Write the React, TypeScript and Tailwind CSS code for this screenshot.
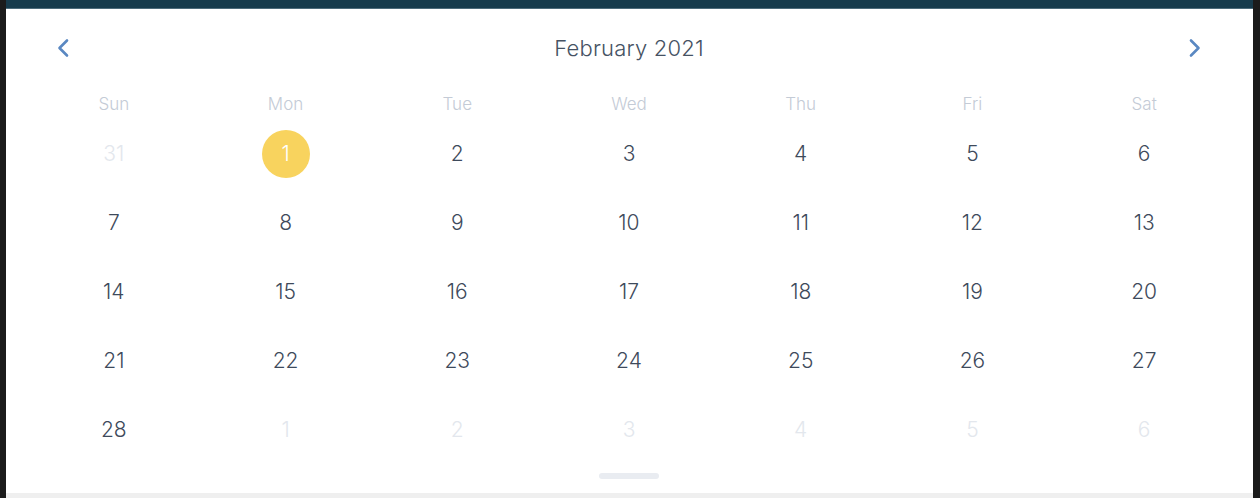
import React from 'react';

const weekdays = ['Sun', 'Mon', 'Tue', 'Wed', 'Thu', 'Fri', 'Sat'];

type Day = { n: number; muted?: boolean; selected?: boolean };

const buildDays = (): Day[][] => {
    const days: Day[] = [{ n: 31, muted: true }];
    for (let i = 1; i <= 28; i++) days.push({ n: i, selected: i === 1 });
    for (let i = 1; i <= 6; i++) days.push({ n: i, muted: true });
    const rows: Day[][] = [];
    for (let i = 0; i < days.length; i += 7) rows.push(days.slice(i, i + 7));
    return rows;
};

const Chevron = ({ dir }: { dir: 'left' | 'right' }) => (
    <svg width="14" height="20" viewBox="0 0 14 20" fill="none">
        <path
            d={dir === 'left' ? 'M11 2.5 L3.5 10 L11 17.5' : 'M3 2.5 L10.5 10 L3 17.5'}
            stroke="#5a88c2"
            strokeWidth="2.6"
            strokeLinecap="round"
            strokeLinejoin="round"
        />
    </svg>
);

export default function App() {
    const rows = buildDays();

    return (
        <div
            className="w-[1260px] h-[498px] bg-[#1b1b1b] flex overflow-hidden"
            style={{ fontFamily: 'Inter, "Noto Sans", sans-serif' }}
        >
            <div className="w-[6px] shrink-0" />
            <div className="flex-1 flex flex-col bg-white">
                {/* top bar */}
                <div className="h-[9px] bg-[#173b4c] border-b border-[#4d6b7a]" />

                <div className="flex-1 flex flex-col pl-[22px] pr-[23px]">
                    {/* header */}
                    <div className="h-[78px] flex items-center justify-between pl-[28px] pr-[28px]">
                        <button className="w-[14px] flex items-center justify-center">
                            <Chevron dir="left" />
                        </button>
                        <div className="text-[22px] font-light text-[#465263] tracking-[0.2px]">February 2021</div>
                        <button className="w-[14px] flex items-center justify-center">
                            <Chevron dir="right" />
                        </button>
                    </div>

                    {/* weekdays */}
                    <div className="grid grid-cols-7 h-[32px] items-center pt-[4px]">
                        {weekdays.map((d) => (
                            <div key={d} className="text-center text-[17px] font-light text-[#c4cbd6]">
                                {d}
                            </div>
                        ))}
                    </div>

                    {/* days */}
                    {rows.map((row, ri) => (
                        <div key={ri} className="grid grid-cols-7 h-[69px] items-center">
                            {row.map((d, di) => (
                                <div key={di} className="flex items-center justify-center">
                                    {d.selected ? (
                                        <div className="w-[48px] h-[48px] rounded-full bg-[#f8d35e] flex items-center justify-center text-[21px] font-light text-white">
                                            {d.n}
                                        </div>
                                    ) : (
                                        <div
                                            className={
                                                d.muted
                                                    ? 'text-[21px] font-light text-[#e3e7ed]'
                                                    : 'text-[21px] font-light text-[#3e4a5b]'
                                            }
                                        >
                                            {d.n}
                                        </div>
                                    )}
                                </div>
                            ))}
                        </div>
                    ))}

                    {/* drag handle */}
                    <div className="flex justify-center mt-[9px]">
                        <div className="w-[60px] h-[6px] rounded-full bg-[#e9ecf1]" />
                    </div>
                </div>

                <div className="h-[5px] bg-[#efefef]" />
            </div>
            <div className="w-[7px] shrink-0" />
        </div>
    );
}
